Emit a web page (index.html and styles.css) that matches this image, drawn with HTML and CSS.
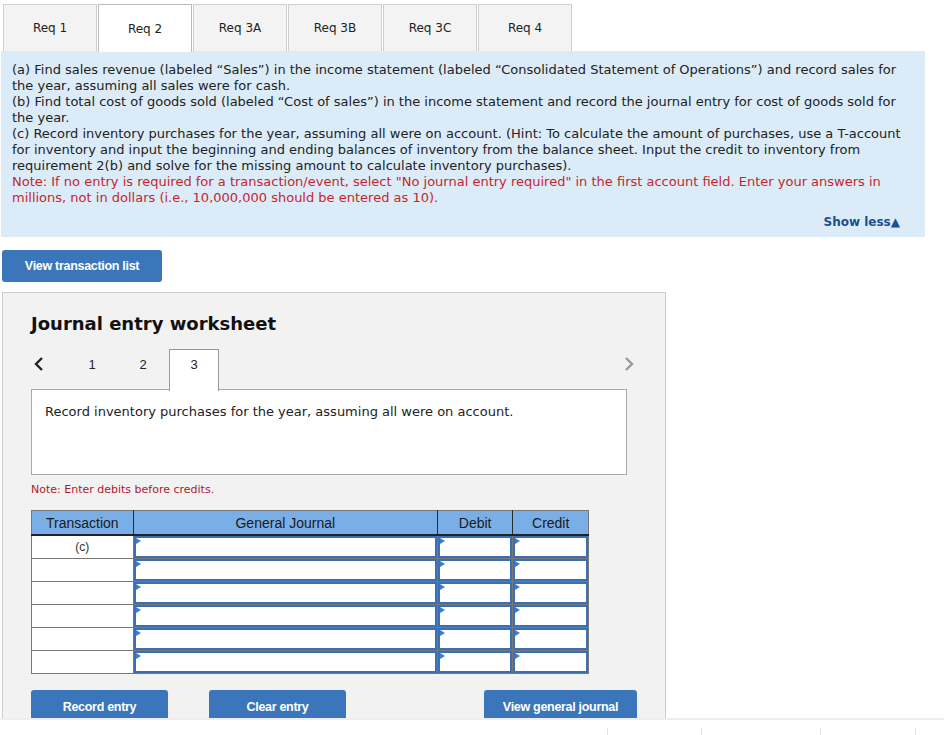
FILE: index.html
```html
<!DOCTYPE html>
<html lang="en">
<head>
    <meta charset="UTF-8">
    <title>Req 2</title>
    <link rel="stylesheet" href="styles.css">
</head>
<body>

    <div class="tabs">
        <div class="tab">Req 1</div>
        <div class="tab active">Req 2</div>
        <div class="tab">Req 3A</div>
        <div class="tab">Req 3B</div>
        <div class="tab">Req 3C</div>
        <div class="tab">Req 4</div>
    </div>

    <div class="prompt">
        <p>(a) Find sales revenue (labeled “Sales”) in the income statement (labeled “Consolidated Statement of Operations”) and record sales for the year, assuming all sales were for cash.</p>
        <p>(b) Find total cost of goods sold (labeled “Cost of sales”) in the income statement and record the journal entry for cost of goods sold for the year.</p>
        <p>(c) Record inventory purchases for the year, assuming all were on account. (Hint: To calculate the amount of purchases, use a T-account for inventory and input the beginning and ending balances of inventory from the balance sheet. Input the credit to inventory from requirement 2(b) and solve for the missing amount to calculate inventory purchases).</p>
        <p class="note">Note: If no entry is required for a transaction/event, select "No journal entry required" in the first account field. Enter your answers in millions, not in dollars (i.e., 10,000,000 should be entered as 10).</p>
        <div class="show-less">Show less▲</div>
    </div>

    <button class="btn list-btn">View transaction list</button>

    <div class="worksheet">
        <h2>Journal entry worksheet</h2>

        <div class="steps">
            <span class="chev">
                <svg width="12" height="16" viewBox="0 0 12 16"><path d="M9 2 L3 8 L9 14" fill="none" stroke="#222" stroke-width="2.4"/></svg>
            </span>
            <span class="step">1</span>
            <span class="step">2</span>
            <span class="step current">3</span>
            <span class="chev right">
                <svg width="12" height="16" viewBox="0 0 12 16"><path d="M3 2 L9 8 L3 14" fill="none" stroke="#999" stroke-width="2.4"/></svg>
            </span>
        </div>

        <div class="desc">Record inventory purchases for the year, assuming all were on account.</div>

        <p class="small-note">Note: Enter debits before credits.</p>

        <table class="journal">
            <thead>
                <tr>
                    <th class="c-trans">Transaction</th>
                    <th class="c-acct">General Journal</th>
                    <th class="c-amt">Debit</th>
                    <th class="c-amt">Credit</th>
                </tr>
            </thead>
            <tbody>
                <tr>
                    <td class="trans">(c)</td>
                    <td class="inp"><div class="field"></div></td>
                    <td class="inp"><div class="field"></div></td>
                    <td class="inp"><div class="field"></div></td>
                </tr>
                <tr>
                    <td class="trans"></td>
                    <td class="inp"><div class="field"></div></td>
                    <td class="inp"><div class="field"></div></td>
                    <td class="inp"><div class="field"></div></td>
                </tr>
                <tr>
                    <td class="trans"></td>
                    <td class="inp"><div class="field"></div></td>
                    <td class="inp"><div class="field"></div></td>
                    <td class="inp"><div class="field"></div></td>
                </tr>
                <tr>
                    <td class="trans"></td>
                    <td class="inp"><div class="field"></div></td>
                    <td class="inp"><div class="field"></div></td>
                    <td class="inp"><div class="field"></div></td>
                </tr>
                <tr>
                    <td class="trans"></td>
                    <td class="inp"><div class="field"></div></td>
                    <td class="inp"><div class="field"></div></td>
                    <td class="inp"><div class="field"></div></td>
                </tr>
                <tr>
                    <td class="trans"></td>
                    <td class="inp"><div class="field"></div></td>
                    <td class="inp"><div class="field"></div></td>
                    <td class="inp"><div class="field"></div></td>
                </tr>
            </tbody>
        </table>

        <div class="actions">
            <button class="btn act">Record entry</button>
            <button class="btn act">Clear entry</button>
            <button class="btn act wide">View general journal</button>
        </div>
    </div>

    <div class="footer">
        <span class="seg s1"></span>
        <span class="seg s2"></span>
        <span class="seg s3"></span>
        <span class="seg s4"></span>
    </div>

</body>
</html>
```

FILE: styles.css
```css
html, body {
    margin: 0;
    padding: 0;
    height: 100%;
    overflow: hidden;
    background: #fff;
    color: #222;
    font-family: "DejaVu Sans", Verdana, sans-serif;
}

/* requirement tabs */
.tabs {
    display: flex;
    align-items: flex-end;
    gap: 1px;
    padding: 3px 0 0 3px;
    height: 51px;
    box-sizing: border-box;
}

.tab {
    width: 94px;
    height: 47px;
    box-sizing: border-box;
    display: flex;
    align-items: center;
    justify-content: center;
    background: #f3f3f3;
    border: 1px solid #cfcfcf;
    border-bottom: none;
    font-size: 12px;
    color: #222;
}

.tab.active {
    background: #fff;
    height: 48px;
    margin-bottom: -1px;
    border-color: #bbb;
    position: relative;
}

/* question text */
.prompt {
    margin: 0 0 0 1px;
    width: 924px;
    box-sizing: border-box;
    background: #dbecf8;
    padding: 11px 11px 6px 11px;
    font-size: 13px;
    line-height: 16px;
    color: #222;
    height: 186px;
}

.prompt p {
    margin: 0;
}

.prompt .note {
    color: #c4262e;
}

.show-less {
    text-align: right;
    margin-top: 8px;
    padding-right: 14px;
    font-weight: bold;
    font-size: 12px;
    color: #1b4f8e;
}

/* buttons */
.btn {
    border: none;
    border-radius: 3px;
    background: #3a76b9;
    color: #fff;
    font-family: "Liberation Sans", Arial, sans-serif;
    font-weight: bold;
    font-size: 12.5px;
    letter-spacing: -0.3px;
    cursor: pointer;
}

.list-btn {
    display: block;
    margin: 13px 0 0 2px;
    width: 160px;
    height: 32px;
}

/* worksheet panel */
.worksheet {
    margin: 10px 0 0 2px;
    width: 664px;
    height: 460px;
    box-sizing: border-box;
    background: #f2f2f2;
    border: 1px solid #cccccc;
    padding: 19px 28px 0 28px;
}

.worksheet h2 {
    margin: 0;
    font-size: 18px;
    font-weight: bold;
    color: #111;
    line-height: 24px;
}

.steps {
    display: flex;
    align-items: stretch;
    height: 41px;
    margin-top: 13px;
    width: 596px;
    position: relative;
    z-index: 1;
}

.chev {
    width: 36px;
    flex-shrink: 0;
    display: flex;
    align-items: flex-start;
    padding: 7px 0 0 2px;
    box-sizing: border-box;
}

.chev.right {
    margin-left: auto;
    width: auto;
    padding: 7px 0 0 0;
    margin-right: -8px;
}

.step {
    width: 50px;
    flex-shrink: 0;
    display: flex;
    align-items: flex-start;
    justify-content: center;
    padding-top: 8px;
    box-sizing: border-box;
    font-family: "Liberation Sans", Arial, sans-serif;
    font-size: 13px;
    color: #222;
    margin-right: 1px;
}

.step.current {
    background: #fff;
    border: 1px solid #999;
    border-bottom: none;
    height: 42px;
    padding-top: 7px;
}

.desc {
    width: 596px;
    height: 86px;
    box-sizing: border-box;
    background: #fff;
    border: 1px solid #aaa;
    margin-top: -1px;
    padding: 14px 13px;
    font-size: 13px;
    color: #222;
}

.small-note {
    margin: 8px 0 0 0;
    font-size: 11px;
    line-height: 14px;
    color: #b0182a;
}

/* journal table */
.journal {
    margin-top: 13px;
    border-collapse: collapse;
    width: 558px;
    font-family: "Liberation Sans", Arial, sans-serif;
    font-size: 14px;
    background: #fff;
    border: 1px solid #777;
}

.journal th {
    background: #7aaee6;
    font-weight: normal;
    color: #1a1a1a;
    height: 23px;
    padding: 0;
    border-right: 1px solid #2b2b2b;
    border-bottom: 2px solid #222;
}

.journal th:last-child {
    border-right: 1px solid #777;
}

.c-trans { width: 101px; }
.c-acct { width: 306px; }
.c-amt { width: 75px; }

.journal td {
    height: 22px;
    padding: 0;
    border: 1px solid #777;
}

.journal td.trans {
    text-align: center;
    font-size: 12px;
    color: #333;
    vertical-align: top;
    padding-top: 4px;
    height: 18px;
}

.field {
    position: relative;
    height: 18px;
    border: 2px solid #3a6fb3;
    background: #fff;
}

.field::before {
    content: "";
    position: absolute;
    left: 0;
    top: 0;
    border-top: 3px solid transparent;
    border-bottom: 3px solid transparent;
    border-left: 5px solid #3b7bd0;
}

.actions {
    display: flex;
    gap: 41px;
    margin-top: 16px;
}

.act {
    width: 137px;
    height: 34px;
}

.act.wide {
    width: 153px;
    margin-left: auto;
}

/* strip over the bottom of the page */
.footer {
    position: fixed;
    left: 0;
    right: 0;
    bottom: 0;
    height: 15px;
    background: #fff;
    border-top: 2px solid #eeeeee;
    display: flex;
}

.seg {
    border-right: 1px solid #e4e4e4;
    margin-top: 8px;
}

.s1 { width: 607px; }
.s2 { width: 93px; }
.s3 { width: 118px; }
.s4 { width: 94px; }
```
